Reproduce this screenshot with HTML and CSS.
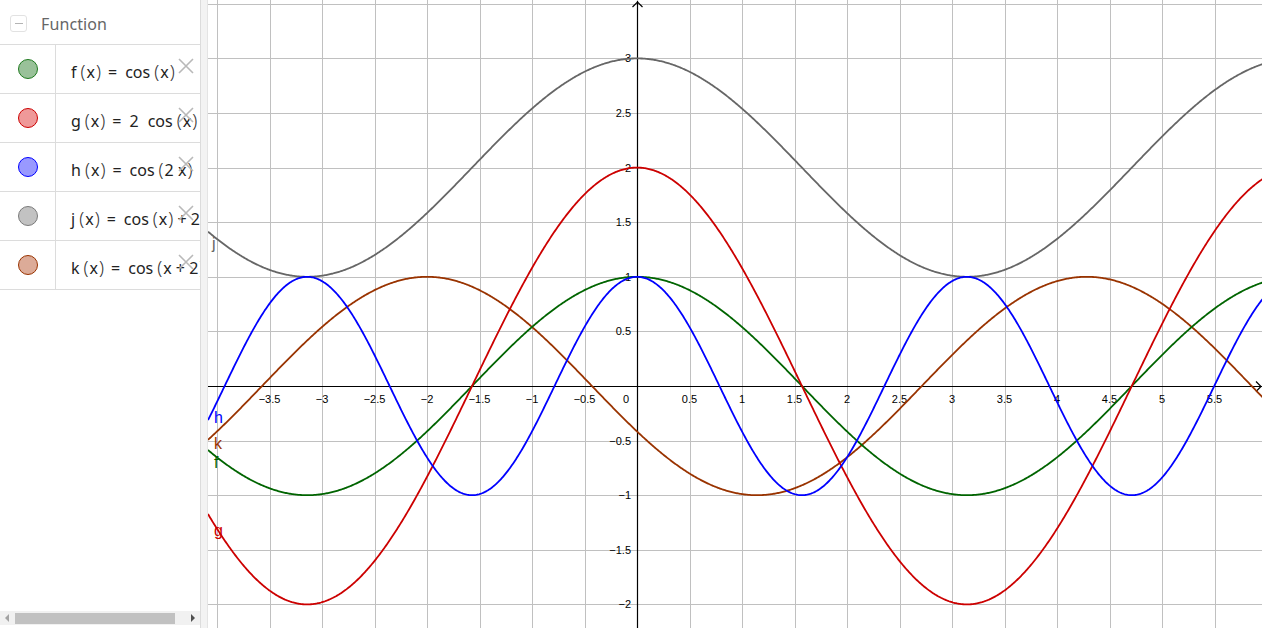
FILE: index.html
```html
<!DOCTYPE html>
<html>
<head>
<meta charset="utf-8">
<link rel="stylesheet" href="styles.css">
</head>
<body>
<div class="app">
  <div class="algebra">
    <div class="header">
      <span class="collapse"><span class="minus"></span></span>
      <span class="title">Function</span>
    </div>
    <div class="row">
      <div class="marble"><span class="dot dot-f"></span></div>
      <div class="formula">f<span class="lp">(</span>x<span class="rp">)</span><span class="eq">=</span>cos<span class="lp">(</span>x<span class="rp">)</span></div>
      <svg class="del" viewBox="0 0 18 18"><path d="M2 2L16 16M16 2L2 16"/></svg>
    </div>
    <div class="row">
      <div class="marble"><span class="dot dot-g"></span></div>
      <div class="formula">g<span class="lp">(</span>x<span class="rp">)</span><span class="eq">=</span>2<span class="sp"></span>cos<span class="lp">(</span>x<span class="rp">)</span></div>
      <svg class="del" viewBox="0 0 18 18"><path d="M2 2L16 16M16 2L2 16"/></svg>
    </div>
    <div class="row">
      <div class="marble"><span class="dot dot-h"></span></div>
      <div class="formula">h<span class="lp">(</span>x<span class="rp">)</span><span class="eq">=</span>cos<span class="lp">(</span>2 x<span class="rp">)</span></div>
      <svg class="del" viewBox="0 0 18 18"><path d="M2 2L16 16M16 2L2 16"/></svg>
    </div>
    <div class="row">
      <div class="marble"><span class="dot dot-j"></span></div>
      <div class="formula">j<span class="lp">(</span>x<span class="rp">)</span><span class="eq">=</span>cos<span class="lp">(</span>x<span class="rp">)</span> + 2</div>
      <svg class="del" viewBox="0 0 18 18"><path d="M2 2L16 16M16 2L2 16"/></svg>
    </div>
    <div class="row">
      <div class="marble"><span class="dot dot-k"></span></div>
      <div class="formula">k<span class="lp">(</span>x<span class="rp">)</span><span class="eq">=</span>cos<span class="lp">(</span>x + 2<span class="rp">)</span></div>
      <svg class="del" viewBox="0 0 18 18"><path d="M2 2L16 16M16 2L2 16"/></svg>
    </div>
    <div class="spacer"></div>
    <div class="hscroll">
      <span class="arrow-left"></span>
      <span class="thumb"></span>
      <span class="arrow-right"></span>
    </div>
  </div>
  <div class="splitter"></div>
  <div class="graphics">
    <svg id="plot" class="plot" width="1055" height="628" viewBox="0 0 1055 628"></svg>
  </div>
</div>
<script src="script.js"></script>
</body>
</html>
```

FILE: styles.css
```css
html, body {
  margin: 0;
  padding: 0;
  background: #ffffff;
  overflow: hidden;
}
.app {
  display: flex;
  width: 1262px;
  height: 628px;
  font-family: "Noto Sans", "Open Sans", sans-serif;
}
.algebra {
  width: 200px;
  height: 628px;
  display: flex;
  flex-direction: column;
  overflow: hidden;
  background: #fff;
  border-right: 1px solid #dcdcdc;
  box-sizing: content-box;
}
.header {
  height: 45px;
  box-sizing: border-box;
  display: flex;
  align-items: center;
  padding-left: 10px;
  padding-top: 3px;
  border-bottom: 1px solid #dcdcdc;
}
.collapse {
  width: 15px;
  height: 15px;
  border: 1px solid #e2e2e2;
  border-radius: 3px;
  display: flex;
  align-items: center;
  justify-content: center;
  margin-right: 14px;
}
.minus {
  width: 8px;
  height: 1px;
  background: #b4b4b4;
}
.title {
  font-size: 16px;
  color: #666666;
  letter-spacing: 0.1px;
}
.row {
  position: relative;
  height: 49px;
  box-sizing: border-box;
  display: flex;
  border-bottom: 1px solid #dcdcdc;
}
.marble {
  width: 56px;
  flex: none;
  box-sizing: border-box;
  border-right: 1px solid #dcdcdc;
  display: flex;
  align-items: center;
  justify-content: center;
}
.dot {
  width: 18px;
  height: 18px;
  border-radius: 50%;
  border: 1px solid;
  margin-bottom: 1px;
}
.dot-f { background: #99c199; border-color: #1f7a1f; }
.dot-g { background: #ef9999; border-color: #cc0000; }
.dot-h { background: #9999ff; border-color: #0000ff; }
.dot-j { background: #c2c2c2; border-color: #7a7a7a; }
.dot-k { background: #dcab98; border-color: #993300; }
.formula {
  padding-left: 15px;
  padding-top: 14px;
  white-space: nowrap;
  font-size: 16px;
  color: #222;
  font-family: "Noto Sans", "DejaVu Sans", sans-serif;
}
.lp, .rp {
  font-size: 18px;
  font-weight: 300;
  color: #333;
}
.lp {
  margin-left: 4px;
  margin-right: 1px;
}
.rp {
  margin-left: 1px;
}
.eq {
  padding: 0 8px 0 7px;
}
.sp {
  display: inline-block;
  width: 9px;
}
.del {
  position: absolute;
  left: 177px;
  top: 12px;
  width: 18px;
  height: 18px;
  fill: none;
  stroke: #b9b9b9;
  stroke-width: 1.6;
}
.spacer {
  flex: 1;
}
.hscroll {
  height: 14px;
  margin-bottom: 3px;
  background: #f1f1f1;
  display: flex;
  align-items: center;
  position: relative;
}
.arrow-left {
  width: 0;
  height: 0;
  border-top: 4px solid transparent;
  border-bottom: 4px solid transparent;
  border-right: 4px solid #a3a3a3;
  margin-left: 5px;
  margin-right: 6px;
}
.thumb {
  width: 160px;
  height: 11px;
  background: #c1c1c1;
}
.arrow-right {
  width: 0;
  height: 0;
  border-top: 4px solid transparent;
  border-bottom: 4px solid transparent;
  border-left: 4px solid #505050;
  margin-left: 16px;
}
.splitter {
  width: 6px;
  height: 628px;
  background: #f3f3f3;
  border-right: 1px solid #e4e4e4;
}
.graphics {
  flex: 1;
  height: 628px;
  overflow: hidden;
}
.plot {
  display: block;
  font-family: "Liberation Sans", Arial, sans-serif;
}
```

FILE: script.js
```js
(function () {
  var NS = "http://www.w3.org/2000/svg";
  var svg = document.getElementById("plot");
  var W = 1055, H = 628, ox = 429, oy = 386, sx = 105, sy = 109.2;

  function el(name, attrs, parent) {
    var e = document.createElementNS(NS, name);
    for (var k in attrs) e.setAttribute(k, attrs[k]);
    (parent || svg).appendChild(e);
    return e;
  }
  function fmt(v) {
    var s = String(Math.abs(v));
    return (v < 0 ? "\u2212" : "") + s;
  }

  var grid = el("g", { stroke: "#c0c0c0", "stroke-width": 1 });
  for (var i = -9; i <= 12; i++) {
    var x = Math.round(ox + i * sx / 2) + 0.5;
    if (x < 0 || x > W) continue;
    el("line", { x1: x, y1: 0, x2: x, y2: H }, grid);
  }
  for (var j = -6; j <= 8; j++) {
    var y = Math.round(oy - j * sy / 2) + 0.5;
    if (y < 0 || y > H) continue;
    el("line", { x1: 0, y1: y, x2: W, y2: y }, grid);
  }

  var axes = el("g", { stroke: "#000", "stroke-width": 1.2, fill: "none" });
  var ax = Math.round(ox) + 0.5, ay = Math.round(oy) + 0.5;
  el("line", { x1: 0, y1: ay, x2: W - 1, y2: ay }, axes);
  el("line", { x1: ax, y1: 1, x2: ax, y2: H }, axes);
  el("path", { d: "M" + (ax - 5) + " 7L" + ax + " 2L" + (ax + 5) + " 7" }, axes);
  el("path", { d: "M" + (W - 7) + " " + (ay - 5) + "L" + (W - 2) + " " + ay + "L" + (W - 7) + " " + (ay + 5) }, axes);

  var labels = el("g", { fill: "#000", "font-size": "11" });
  for (var i2 = -7; i2 <= 11; i2++) {
    var v = i2 / 2;
    var tx = ox + i2 * sx / 2;
    var t;
    if (i2 === 0) {
      t = el("text", { x: ox - 11, y: oy + 17, "text-anchor": "middle" }, labels);
      t.textContent = "0";
      continue;
    }
    t = el("text", { x: tx, y: oy + 17, "text-anchor": "middle" }, labels);
    t.textContent = fmt(v);
  }
  for (var j2 = -4; j2 <= 6; j2++) {
    if (j2 === 0) continue;
    var vy = j2 / 2;
    var ty = oy - j2 * sy / 2 + 4;
    var t2 = el("text", { x: ox - 6, y: ty, "text-anchor": "end" }, labels);
    t2.textContent = fmt(vy);
  }

  var fns = [
    { f: function (x) { return Math.cos(x) + 2; }, c: "#666666" },
    { f: function (x) { return Math.cos(x + 2); }, c: "#993300" },
    { f: function (x) { return Math.cos(x); }, c: "#006400" },
    { f: function (x) { return 2 * Math.cos(x); }, c: "#cc0000" },
    { f: function (x) { return Math.cos(2 * x); }, c: "#0000ff" }
  ];
  fns.forEach(function (fn) {
    var pts = [];
    for (var px = 0; px <= W; px += 1) {
      var xv = (px - ox) / sx;
      var yv = fn.f(xv);
      pts.push(px + "," + (oy - yv * sy).toFixed(2));
    }
    el("polyline", { points: pts.join(" "), fill: "none", stroke: fn.c, "stroke-width": 1.8, "stroke-linejoin": "round" });
  });

  var names = [
    { t: "j", x: 4, y: 249, c: "#666666" },
    { t: "h", x: 6, y: 423, c: "#0000ff" },
    { t: "k", x: 6, y: 449, c: "#993300" },
    { t: "f", x: 6, y: 468, c: "#006400" },
    { t: "g", x: 6, y: 536, c: "#cc0000" }
  ];
  names.forEach(function (n) {
    var t = el("text", { x: n.x, y: n.y, fill: n.c, "font-size": "16" });
    t.textContent = n.t;
  });
})();
```
